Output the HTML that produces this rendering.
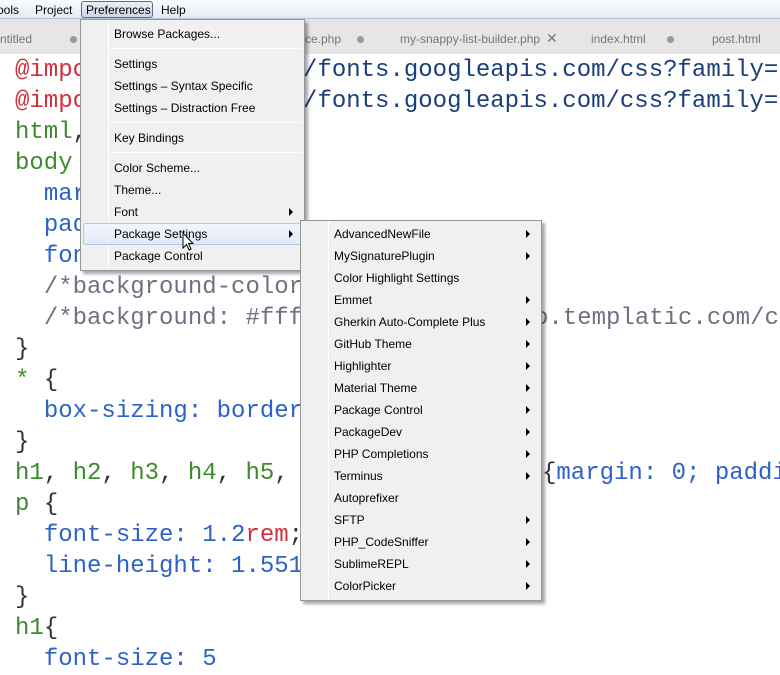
<!DOCTYPE html>
<html><head><meta charset="utf-8"><style>
*{margin:0;padding:0;box-sizing:border-box}
body{width:780px;height:653px;overflow:hidden;background:#fff;position:relative;font-family:"Liberation Sans",sans-serif}
#mb{position:absolute;left:0;top:0;width:780px;height:19px;background:linear-gradient(#fbfcfe,#e4e9f4);border-bottom:1px solid #b9c3d6;font-size:12px}
#mb span{position:absolute;top:3px;color:#000}
#tabs{position:absolute;left:0;top:19px;width:780px;height:35px;background:#e6e6e6}
.tab{position:absolute;top:13px;font-size:12px;color:#777}
.dot{position:absolute;top:17px;width:7px;height:7px;border-radius:50%;background:#999}
.code{position:absolute;font-family:"Liberation Mono",monospace;font-size:24px;line-height:31px;white-space:pre}
.r{color:#d0313c}.b{color:#1a3e7a}.g{color:#3c8a2e}.p{color:#2d62c8}.c{color:#6b7383}.k{color:#333}
.menu{position:absolute;background:#f0f0f0;border:1px solid #979797;box-shadow:3px 3px 3px rgba(0,0,0,.35);font-size:12px}
.it{position:absolute;left:0;right:0;height:22px;line-height:22px;color:#000}
.it span{position:absolute}
.ar{position:absolute;width:0;height:0;border-top:4px solid transparent;border-bottom:4px solid transparent;border-left:4px solid #000;top:7px}
.sep{position:absolute;height:1px;background:#d7d7d7;border-bottom:1px solid #fff}
</style></head><body>
<div id="mb"><span style="left:-3px">ools</span><span style="left:35px">Project</span>
<div style="position:absolute;left:81px;top:1px;width:72px;height:17px;border:1px solid #5f6e88;border-radius:3px;background:linear-gradient(#e9eef7,#cdd6e6)"></div>
<span style="left:86px">Preferences</span><span style="left:161px">Help</span></div>
<div id="tabs">
<span class="tab" style="left:0">ntitled</span><div class="dot" style="left:70px"></div>
<span class="tab" style="left:305px">ce.php</span><div class="dot" style="left:357px"></div>
<span class="tab" style="left:400px">my-snappy-list-builder.php</span><span class="tab" style="left:546px;top:11px;font-size:14px">✕</span>
<span class="tab" style="left:591px">index.html</span><div class="dot" style="left:667px"></div>
<span class="tab" style="left:712px">post.html</span>
</div>
<div class="code" style="left:15px;top:55px"><span class="r">@import url('https:/</span><span class="b">/fonts.googleapis.com/css?family=</span>
<span class="r">@import url('https:/</span><span class="b">/fonts.googleapis.com/css?family=</span>
<span class="g">html</span><span class="k">,</span>
<span class="g">body</span> <span class="k">{</span>
  <span class="p">margin</span>
  <span class="p">padding</span>
  <span class="p">font-family</span>
  <span class="c">/*background-color</span>
  <span class="c">/*background: #fff</span>
<span class="k">}</span>
<span class="g">*</span> <span class="k">{</span>
  <span class="p">box-sizing: border</span>
<span class="k">}</span>
<span class="g">h1</span><span class="k">, </span><span class="g">h2</span><span class="k">, </span><span class="g">h3</span><span class="k">, </span><span class="g">h4</span><span class="k">, </span><span class="g">h5</span><span class="k">,</span>
<span class="g">p</span> <span class="k">{</span>
  <span class="p">font-size: 1.2</span><span class="r">rem</span><span class="k">;</span>
  <span class="p">line-height: 1.551</span>
<span class="k">}</span>
<span class="g">h1</span><span class="k">{</span>
  <span class="p">font-size: 5</span></div>
<div class="code c" style="left:534px;top:303px">o.templatic.com/c</div>
<div class="code" style="left:542px;top:458px"><span class="k">{</span><span class="p">margin: 0; paddi</span></div>
<div class="menu" style="left:80px;top:19px;width:225px;height:252px">
<div style="position:absolute;left:27px;top:0;bottom:0;width:1px;background:#d7d7d7;border-right:1px solid #fff"></div>
<div class="it" style="top:3px"><span style="left:33px">Browse Packages...</span></div>
<div class="sep" style="left:29px;right:2px;top:28px"></div>
<div class="it" style="top:33px"><span style="left:33px">Settings</span></div>
<div class="it" style="top:55px"><span style="left:33px">Settings – Syntax Specific</span></div>
<div class="it" style="top:77px"><span style="left:33px">Settings – Distraction Free</span></div>
<div class="sep" style="left:29px;right:2px;top:102px"></div>
<div class="it" style="top:107px"><span style="left:33px">Key Bindings</span></div>
<div class="sep" style="left:29px;right:2px;top:132px"></div>
<div class="it" style="top:137px"><span style="left:33px">Color Scheme...</span></div>
<div class="it" style="top:159px"><span style="left:33px">Theme...</span></div>
<div class="it" style="top:181px"><span style="left:33px">Font</span><div class="ar" style="left:208px"></div></div>
<div class="it" style="top:203px;left:2px;right:2px;border:1px solid #a9c8ef;border-radius:3px;background:linear-gradient(#f2f6fc,#e1eaf8);line-height:20px"><span style="left:30px">Package Settings</span><div class="ar" style="left:205px;top:6px"></div></div>
<div class="it" style="top:225px"><span style="left:33px">Package Control</span></div>
</div>
<div class="menu" style="left:300px;top:220px;width:242px;height:381px">
<div style="position:absolute;left:27px;top:0;bottom:0;width:1px;background:#d7d7d7;border-right:1px solid #fff"></div>
<div class="it" style="top:2px"><span style="left:33px">AdvancedNewFile</span><div class="ar" style="left:225px"></div></div>
<div class="it" style="top:24px"><span style="left:33px">MySignaturePlugin</span><div class="ar" style="left:225px"></div></div>
<div class="it" style="top:46px"><span style="left:33px">Color Highlight Settings</span></div>
<div class="it" style="top:68px"><span style="left:33px">Emmet</span><div class="ar" style="left:225px"></div></div>
<div class="it" style="top:90px"><span style="left:33px">Gherkin Auto-Complete Plus</span><div class="ar" style="left:225px"></div></div>
<div class="it" style="top:112px"><span style="left:33px">GitHub Theme</span><div class="ar" style="left:225px"></div></div>
<div class="it" style="top:134px"><span style="left:33px">Highlighter</span><div class="ar" style="left:225px"></div></div>
<div class="it" style="top:156px"><span style="left:33px">Material Theme</span><div class="ar" style="left:225px"></div></div>
<div class="it" style="top:178px"><span style="left:33px">Package Control</span><div class="ar" style="left:225px"></div></div>
<div class="it" style="top:200px"><span style="left:33px">PackageDev</span><div class="ar" style="left:225px"></div></div>
<div class="it" style="top:222px"><span style="left:33px">PHP Completions</span><div class="ar" style="left:225px"></div></div>
<div class="it" style="top:244px"><span style="left:33px">Terminus</span><div class="ar" style="left:225px"></div></div>
<div class="it" style="top:266px"><span style="left:33px">Autoprefixer</span></div>
<div class="it" style="top:288px"><span style="left:33px">SFTP</span><div class="ar" style="left:225px"></div></div>
<div class="it" style="top:310px"><span style="left:33px">PHP_CodeSniffer</span><div class="ar" style="left:225px"></div></div>
<div class="it" style="top:332px"><span style="left:33px">SublimeREPL</span><div class="ar" style="left:225px"></div></div>
<div class="it" style="top:354px"><span style="left:33px">ColorPicker</span><div class="ar" style="left:225px"></div></div>
</div>
<svg style="position:absolute;left:182px;top:232px" width="14" height="20" viewBox="0 0 14 20"><path d="M1 1 L1 16 L4.5 12.5 L7 18 L9 17 L6.5 11.5 L11 11.5 Z" fill="#fff" stroke="#000" stroke-width="1"/></svg>
</body></html>
